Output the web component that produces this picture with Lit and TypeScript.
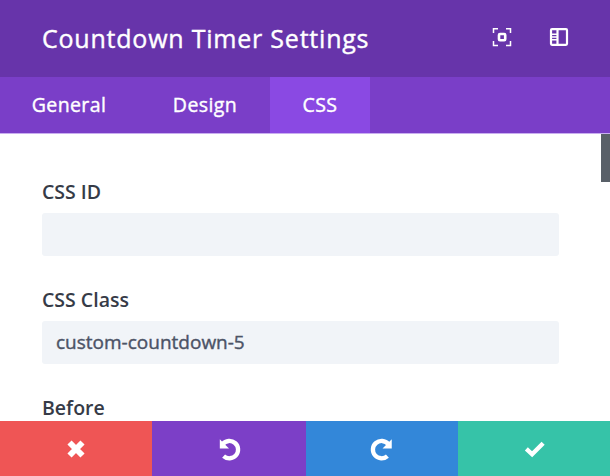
import { LitElement, html, css } from "lit";
import { customElement } from "lit/decorators.js";

@customElement("app-root")
export class AppRoot extends LitElement {
  static styles = css`
    :host { display: block; width: 610px; height: 476px; font-family: "Open Sans", sans-serif; overflow: hidden; }
    .panel { width: 610px; height: 476px; display: flex; flex-direction: column; background: #fff; }
    .header { height: 77px; flex: none; background: #6734aa; display: flex; align-items: center; padding: 0 42px; box-sizing: border-box; color: #fff; }
    .title { flex: 1; font-size: 25px; font-weight: 500; letter-spacing: 0.78px; line-height: 75px; -webkit-text-stroke: 0.4px #fff; }
    .hicons { display: flex; gap: 37px; margin-right: -1px; padding-bottom: 4px; align-items: center; }
    .hicons svg { display: block; width: 20px; height: 20px; }
    .tabs { height: 56px; flex: none; background: #7a3ec8; display: flex; border-bottom: 1px solid #c9aef0; }
    .tab { color: #fff; font-size: 19.5px; font-weight: 500; letter-spacing: 0.4px; line-height: 56px; text-align: center; box-sizing: border-box; -webkit-text-stroke: 0.4px #fff; }
    .tab.g { width: 138px; }
    .tab.d { width: 132px; padding-left: 2px; }
    .tab.c { width: 100px; background: #8a49e3; }
    .body { flex: 1; position: relative; overflow: hidden; padding: 45px 51px 0 42px; box-sizing: border-box; min-height: 0; }
    .thumb { position: absolute; right: 0; top: 0; width: 9px; height: 48px; background: #596068; }
    .label { color: #363b47; font-size: 19.5px; font-weight: 600; line-height: 26px; margin-bottom: 8px; }
    .input { height: 43px; background: #f1f4f8; border-radius: 3px; padding: 0 14px; color: #4c5366; font-size: 19px; font-weight: 500; line-height: 43px; margin-bottom: 31px; -webkit-text-stroke: 0.4px #4c5366; }
    .footer { height: 55px; flex: none; display: grid; grid-template-columns: 152px 154px 152px 152px; }
    .btn { display: flex; align-items: center; justify-content: center; }
    .btn svg { display: block; width: 26px; height: 26px; }
    .btn.t svg { width: 23px; height: 23px; }
    .r { background: #ef5555; }
    .p { background: #7c3fc7; }
    .b { background: #3387d9; }
    .t { background: #36c3a8; }
  `;

  render() {
    return html`
      <div class="panel">
        <div class="header">
          <div class="title">Countdown Timer Settings</div>
          <div class="hicons">
            <svg viewBox="0 0 20 20" fill="none" stroke="#fff" stroke-width="1.5">
              <path d="M1.5 6V1.8H6M14 1.8H18.5V6M18.5 14V18.5H14M6 18.5H1.5V14" />
              <rect x="7" y="7" width="6.2" height="6.2" rx="1" stroke-width="2.6" />
            </svg>
            <svg viewBox="0 0 20 20" fill="none" stroke="#fff">
              <rect x="2" y="2.2" width="16" height="15.6" rx="1" stroke-width="2.2" />
              <path d="M8.5 2.5V17.5" stroke-width="2.2" />
              <path d="M2 7.2H8M2 10H8M2 12.8H8" stroke-width="1.4" />
            </svg>
          </div>
        </div>
        <div class="tabs">
          <div class="tab g">General</div>
          <div class="tab d">Design</div>
          <div class="tab c">CSS</div>
        </div>
        <div class="body">
          <div class="thumb"></div>
          <div class="label">CSS ID</div>
          <div class="input"></div>
          <div class="label">CSS Class</div>
          <div class="input">custom-countdown-5</div>
          <div class="label">Before</div>
        </div>
        <div class="footer">
          <div class="btn r">
            <svg viewBox="0 0 24 24" fill="none" stroke="#fff" stroke-width="5.4"><path d="M6 6L18 18M18 6L6 18" /></svg>
          </div>
          <div class="btn p">
            <svg viewBox="0 0 24 24" fill="none" stroke="#fff" stroke-width="4">
              <path d="M6.2 7.5A8 8 0 1 1 7 18.5" />
              <path d="M3.5 3V11.5H12Z" fill="#fff" stroke="none" />
            </svg>
          </div>
          <div class="btn b">
            <svg viewBox="0 0 24 24" fill="none" stroke="#fff" stroke-width="4">
              <path d="M17.8 7.5A8 8 0 1 0 17 18.5" />
              <path d="M21 3V11.5H12.5Z" fill="#fff" stroke="none" />
            </svg>
          </div>
          <div class="btn t">
            <svg viewBox="0 0 24 24" fill="none" stroke="#fff" stroke-width="4.6"><path d="M3.5 12.5L9.5 18L21 6.5" /></svg>
          </div>
        </div>
      </div>
    `;
  }
}
